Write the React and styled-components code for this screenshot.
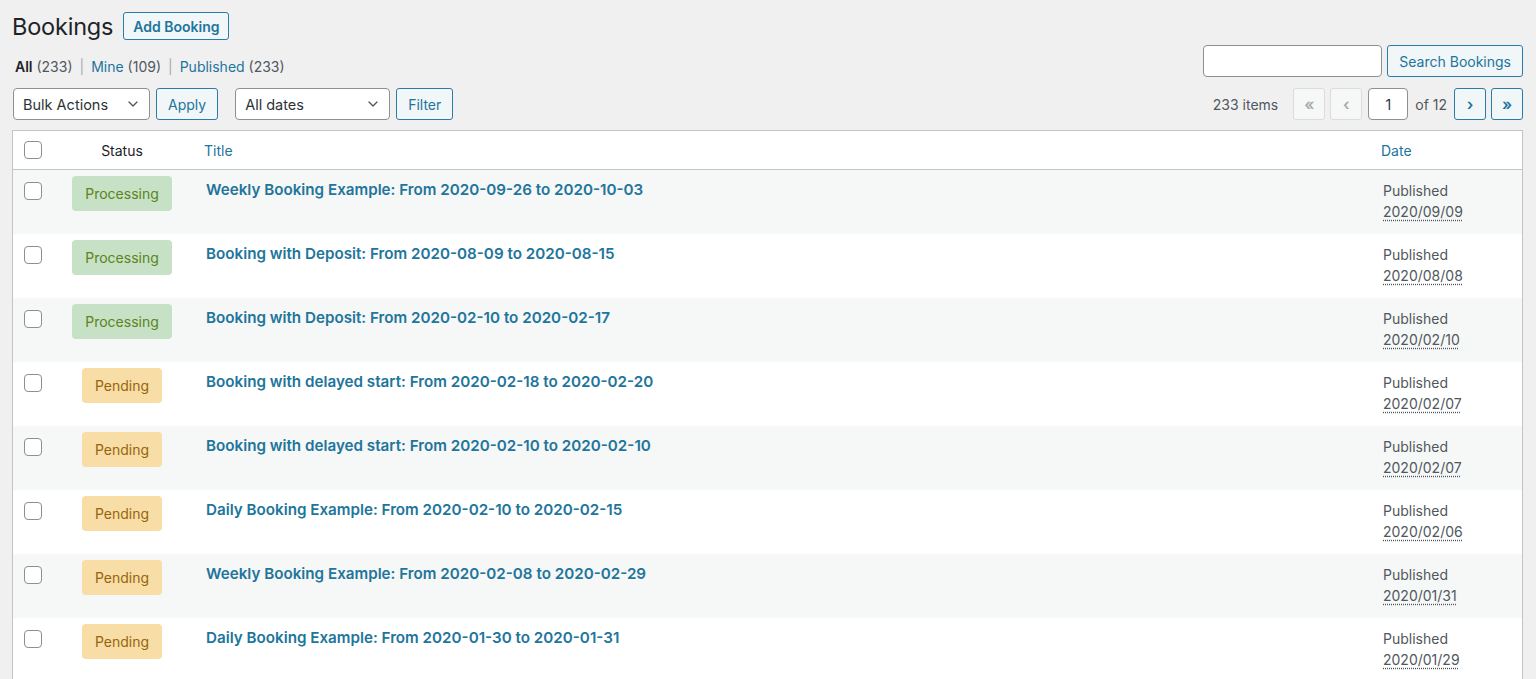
import React from 'react'
import styled, { createGlobalStyle } from 'styled-components'
import { ChevronDown } from 'lucide-react'

const rows = [
  { status: 'Processing', title: 'Weekly Booking Example: From 2020-09-26 to 2020-10-03', date: '2020/09/09' },
  { status: 'Processing', title: 'Booking with Deposit: From 2020-08-09 to 2020-08-15', date: '2020/08/08' },
  { status: 'Processing', title: 'Booking with Deposit: From 2020-02-10 to 2020-02-17', date: '2020/02/10' },
  { status: 'Pending', title: 'Booking with delayed start: From 2020-02-18 to 2020-02-20', date: '2020/02/07' },
  { status: 'Pending', title: 'Booking with delayed start: From 2020-02-10 to 2020-02-10', date: '2020/02/07' },
  { status: 'Pending', title: 'Daily Booking Example: From 2020-02-10 to 2020-02-15', date: '2020/02/06' },
  { status: 'Pending', title: 'Weekly Booking Example: From 2020-02-08 to 2020-02-29', date: '2020/01/31' },
  { status: 'Pending', title: 'Daily Booking Example: From 2020-01-30 to 2020-01-31', date: '2020/01/29' },
]

const LINK = '#21759b'

export default function App() {
  return (
    <>
      <GlobalStyle />
      <Page>
        <HeadingRow>
          <Heading>Bookings</Heading>
          <Button $strong>Add Booking</Button>
        </HeadingRow>

        <TopArea>
          <LeftTools>
            <Views>
              <strong>All</strong> <Count>(233)</Count>
              <Sep>|</Sep>
              <a>Mine</a> <Count>(109)</Count>
              <Sep>|</Sep>
              <a>Published</a> <Count>(233)</Count>
            </Views>
            <Toolbar>
              <Select $w={137}>Bulk Actions<ChevronDown size={16} strokeWidth={2} /></Select>
              <Button $h={32}>Apply</Button>
              <Select $w={155} $ml={11}>All dates<ChevronDown size={16} strokeWidth={2} /></Select>
              <Button $h={32}>Filter</Button>
            </Toolbar>
          </LeftTools>

          <RightTools>
            <SearchBox>
              <SearchInput />
              <Button $h={32}>Search Bookings</Button>
            </SearchBox>
            <Pager>
              <Items>233 items</Items>
              <PageBtn $disabled>«</PageBtn>
              <PageBtn $disabled>‹</PageBtn>
              <PageInput>1</PageInput>
              <OfText>of 12</OfText>
              <PageBtn>›</PageBtn>
              <PageBtn>»</PageBtn>
            </Pager>
          </RightTools>
        </TopArea>

        <Table>
          <HeadRow>
            <CheckCell><Check /></CheckCell>
            <StatusHead>Status</StatusHead>
            <LinkHead>Title</LinkHead>
            <LinkHead>Date</LinkHead>
          </HeadRow>
          {rows.map((r, i) => (
            <Row key={i} $striped={i % 2 === 0}>
              <CheckCell $top><Check /></CheckCell>
              <StatusCell>
                <Badge $kind={r.status}>{r.status}</Badge>
              </StatusCell>
              <TitleCell>{r.title}</TitleCell>
              <DateCell>
                Published
                <abbr>{r.date}</abbr>
              </DateCell>
            </Row>
          ))}
        </Table>
      </Page>
    </>
  )
}

const GlobalStyle = createGlobalStyle`
  html, body {
    margin: 0;
    padding: 0;
    background: #f0f0f1;
    font-family: Inter, "Liberation Sans", Arial, sans-serif;
    color: #1d2327;
    overflow: hidden;
  }
`

const Page = styled.div`
  padding: 10px 13px 0 12px;
`

const HeadingRow = styled.div`
  display: flex;
  align-items: center;
  gap: 10px;
  height: 32px;
`

const Heading = styled.h1`
  margin: 0;
  font-size: 23.5px;
  font-weight: 400;
  letter-spacing: -0.2px;
  color: #1d2327;
`

const Button = styled.button`
  height: ${p => p.$h || 28}px;
  padding: 0 ${p => (p.$strong ? 9 : 11)}px;
  border: 1px solid #2a7ca6;
  border-radius: 3px;
  background: #f1f6f9;
  color: ${LINK};
  font-family: inherit;
  font-size: 14px;
  font-weight: ${p => (p.$strong ? 600 : 400)};
  cursor: pointer;
`

const TopArea = styled.div`
  display: flex;
  justify-content: space-between;
  align-items: flex-end;
  margin-top: 3px;
`

const LeftTools = styled.div`
  display: flex;
  flex-direction: column;
`

const Views = styled.div`
  font-size: 14px;
  height: 24px;
  line-height: 24px;
  padding-left: 3px;
  margin-bottom: 9px;
  color: #50575e;
  strong { color: #1d2327; font-weight: 600; }
  a { color: ${LINK}; }
`

const Count = styled.span`
  color: #50575e;
`

const Sep = styled.span`
  color: #a7aaad;
  margin: 0 7px;
`

const Toolbar = styled.div`
  display: flex;
  align-items: center;
  gap: 6px;
  padding-left: 1px;
`

const Select = styled.div`
  width: ${p => p.$w}px;
  height: 32px;
  box-sizing: border-box;
  margin-left: ${p => p.$ml || 0}px;
  display: flex;
  align-items: center;
  justify-content: space-between;
  padding: 0 8px 0 9px;
  background: #fff;
  border: 1px solid #8c8f94;
  border-radius: 4px;
  font-size: 14.5px;
  color: #2c3338;
  svg { color: #50575e; }
`

const RightTools = styled.div`
  display: flex;
  flex-direction: column;
  align-items: flex-end;
  gap: 11px;
`

const SearchBox = styled.div`
  display: flex;
  gap: 5px;
`

const SearchInput = styled.div`
  width: 179px;
  height: 32px;
  box-sizing: border-box;
  background: #fff;
  border: 1px solid #8c8f94;
  border-radius: 4px;
`

const Pager = styled.div`
  display: flex;
  align-items: center;
  gap: 5px;
  font-size: 14px;
  color: #50575e;
`

const Items = styled.span`
  margin-right: 10px;
`

const PageBtn = styled.div`
  width: 32px;
  height: 32px;
  box-sizing: border-box;
  display: flex;
  align-items: center;
  justify-content: center;
  border-radius: 3px;
  font-size: 16px;
  font-weight: 600;
  border: 1px solid ${p => (p.$disabled ? '#dcdcde' : '#2a7ca6')};
  background: ${p => (p.$disabled ? '#f6f7f7' : '#f1f6f9')};
  color: ${p => (p.$disabled ? '#a7aaad' : LINK)};
`

const PageInput = styled.div`
  width: 40px;
  height: 32px;
  box-sizing: border-box;
  display: flex;
  align-items: center;
  justify-content: center;
  background: #fff;
  border: 1px solid #8c8f94;
  border-radius: 4px;
  color: #2c3338;
  margin-left: 1px;
`

const OfText = styled.span`
  margin: 0 2px;
`

const Table = styled.div`
  margin-top: 10px;
  background: #fff;
  border: 1px solid #c3c4c7;
  box-shadow: 0 1px 1px rgba(0, 0, 0, 0.04);
`

const HeadRow = styled.div`
  display: grid;
  grid-template-columns: 48px 122px 1fr 151px;
  align-items: center;
  height: 38px;
  border-bottom: 1px solid #c3c4c7;
  font-size: 14px;
`

const Row = styled.div`
  display: grid;
  grid-template-columns: 48px 122px 1fr 151px;
  align-items: start;
  height: 64px;
  background: ${p => (p.$striped ? '#f6f7f7' : '#fff')};
`

const CheckCell = styled.div`
  padding-left: 11px;
  padding-top: ${p => (p.$top ? 12 : 0)}px;
  display: flex;
`

const Check = styled.span`
  width: 16px;
  height: 16px;
  background: #fff;
  border: 1px solid #8c8f94;
  border-radius: 4px;
`

const StatusHead = styled.div`
  text-align: center;
  color: #1d2327;
`

const LinkHead = styled.div`
  color: ${LINK};
  padding-left: 21px;
  &:last-child { padding-left: 10px; }
`

const StatusCell = styled.div`
  display: flex;
  justify-content: center;
  padding-top: 6px;
`

const Badge = styled.span`
  height: 35px;
  padding: 0 13px;
  display: inline-flex;
  align-items: center;
  border-radius: 4px;
  font-size: 14px;
  background: ${p => (p.$kind === 'Processing' ? '#c6e1c6' : '#f8dda7')};
  color: ${p => (p.$kind === 'Processing' ? '#5b841b' : '#94660c')};
`

const TitleCell = styled.div`
  padding: 10px 0 0 23px;
  font-size: 15.2px;
  font-weight: 600;
  color: ${LINK};
`

const DateCell = styled.div`
  display: flex;
  flex-direction: column;
  padding: 10px 0 0 12px;
  font-size: 14px;
  line-height: 21px;
  color: #50575e;
  abbr {
    text-decoration: underline dotted;
    text-underline-offset: 3px;
  }
`
